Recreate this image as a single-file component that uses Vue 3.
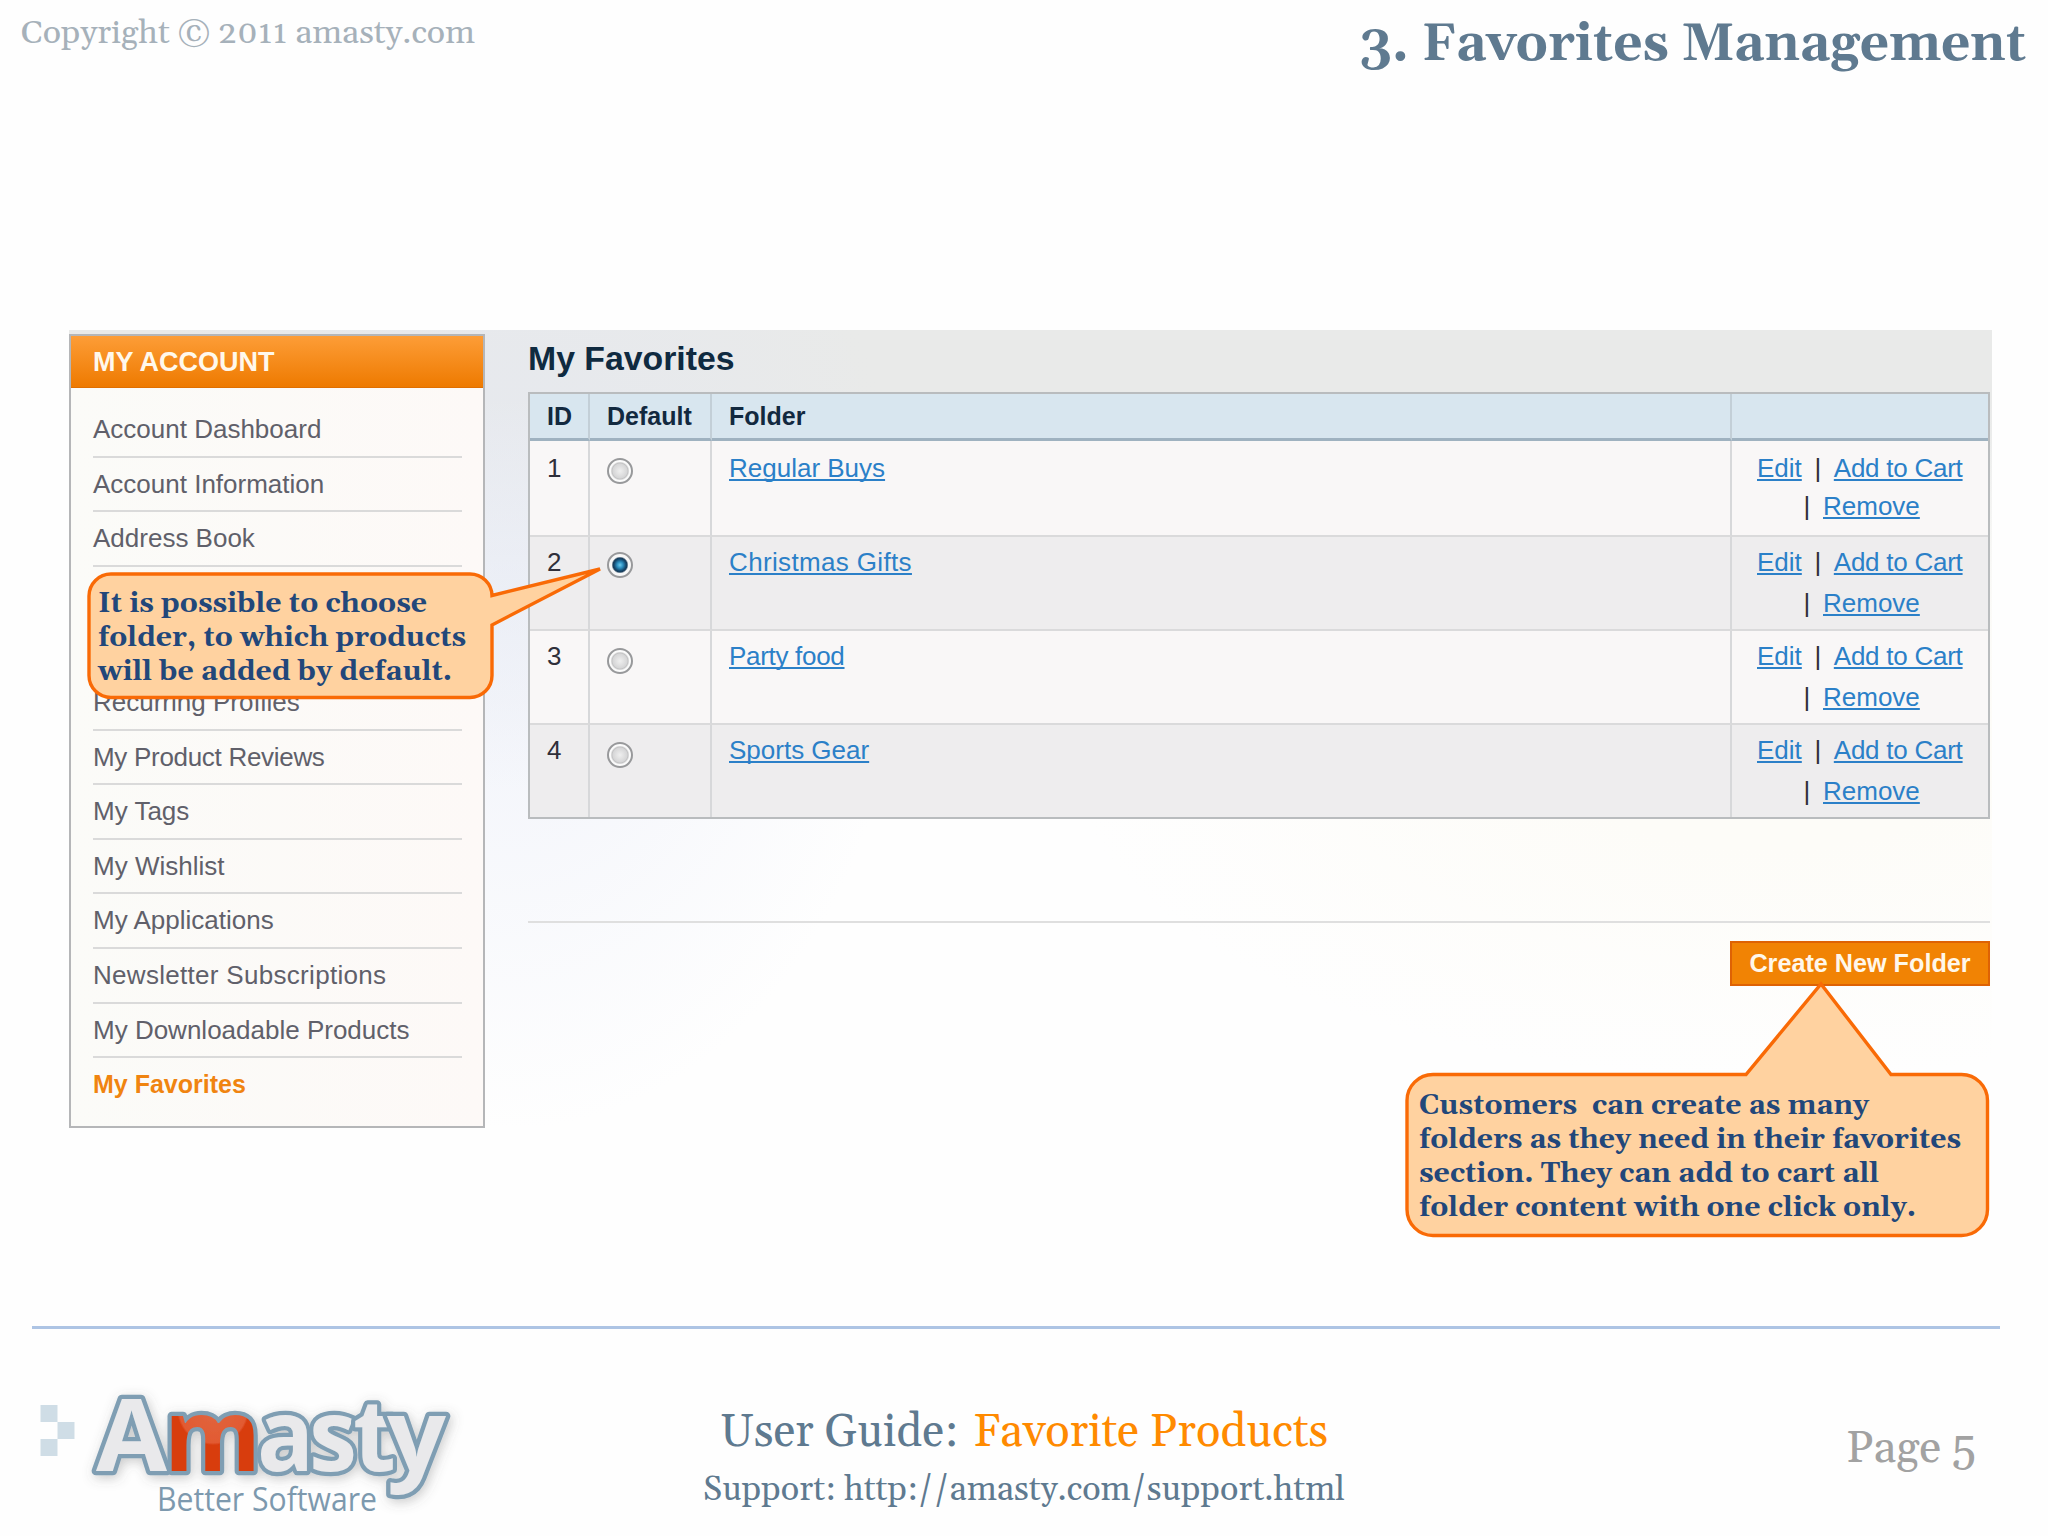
<template>
  <div class="slide">
    <header class="slide-header">
      <svg class="copyright" width="500" height="60">
        <text x="21" y="43" textLength="454" lengthAdjust="spacingAndGlyphs">Copyright © 2011 amasty.com</text>
      </svg>
      <svg class="title" width="708" height="90">
        <text x="20" y="60" textLength="666" lengthAdjust="spacingAndGlyphs">3. Favorites Management</text>
      </svg>
    </header>

    <main class="account">
      <aside class="sidebar">
        <h3>MY ACCOUNT</h3>
        <ul>
          <li v-for="(item, i) in menu" :key="i" :class="{ active: item === 'My Favorites' }">
            <span>{{ item }}</span>
          </li>
        </ul>
      </aside>

      <section class="favorites">
        <h2>My Favorites</h2>
        <table>
          <thead>
            <tr>
              <th class="col-id">ID</th>
              <th class="col-default">Default</th>
              <th class="col-folder">Folder</th>
              <th class="col-actions"></th>
            </tr>
          </thead>
          <tbody>
            <tr v-for="folder in folders" :key="folder.id">
              <td>{{ folder.id }}</td>
              <td class="radio-cell">
                <span class="radio" :class="{ checked: folder.id === defaultId }" @click="defaultId = folder.id"></span>
              </td>
              <td class="name"><a>{{ folder.name }}</a></td>
              <td class="actions">
                <div class="action-line"><a>Edit</a><i>|</i><a class="add">Add to Cart</a></div>
                <div class="action-line second"><i>|</i><a class="remove">Remove</a></div>
              </td>
            </tr>
          </tbody>
        </table>
        <div class="buttons">
          <button>Create New Folder</button>
        </div>
      </section>
    </main>

    <!-- callouts -->
    <svg class="callout callout-default" width="520" height="136" viewBox="85 566 520 136">
      <path d="M111 574H470a22 22 0 0 1 22 21.500L600 569L492 625V675.500a22 22 0 0 1-22 22H111a22 22 0 0 1-22-22V596a22 22 0 0 1 22-22Z" />
      <text x="98" y="612" textLength="329" lengthAdjust="spacingAndGlyphs">It is possible to choose</text>
      <text x="98" y="646" textLength="368" lengthAdjust="spacingAndGlyphs">folder, to which products</text>
      <text x="98" y="680" textLength="354" lengthAdjust="spacingAndGlyphs">will be added by default.</text>
    </svg>
    <svg class="callout callout-create" width="590" height="262" viewBox="1403 979 590 262">
      <path d="M1433 1074.500H1746L1821 984L1891 1074.500H1961.500a26 26 0 0 1 26 26V1209.500a26 26 0 0 1-26 26H1433a26 26 0 0 1-26-26V1100.500a26 26 0 0 1 26-26Z" />
      <text x="1419" y="1114" textLength="158" lengthAdjust="spacingAndGlyphs">Customers</text>
      <text x="1592" y="1114" textLength="277" lengthAdjust="spacingAndGlyphs">can create as many</text>
      <text x="1419" y="1148" textLength="542" lengthAdjust="spacingAndGlyphs">folders as they need in their favorites</text>
      <text x="1419" y="1182" textLength="460" lengthAdjust="spacingAndGlyphs">section. They can add to cart all</text>
      <text x="1419" y="1216" textLength="497" lengthAdjust="spacingAndGlyphs">folder content with one click only.</text>
    </svg>

    <footer class="slide-footer">
      <svg class="logo" width="460" height="200" viewBox="32 1336 460 200">
        <defs>
          <radialGradient id="shine" gradientUnits="userSpaceOnUse" cx="213" cy="1409" r="36">
            <stop offset="0" stop-color="#e0663f" />
            <stop offset="0.94" stop-color="#e25a32" />
            <stop offset="1" stop-color="#d83d0f" />
          </radialGradient>
          <filter id="glow" x="-10%" y="-20%" width="120%" height="140%">
            <feDropShadow dx="2" dy="3" stdDeviation="6" flood-color="#555" flood-opacity="0.3" />
          </filter>
        </defs>
        <g fill="#cfdde6">
          <rect x="40.500" y="1405" width="17" height="17" />
          <rect x="57.500" y="1422" width="17" height="17" />
          <rect x="40.500" y="1439" width="17" height="17" />
        </g>
        <g filter="url(#glow)">
          <text class="wordmark" y="1471"><tspan x="96" textLength="71" lengthAdjust="spacingAndGlyphs">A</tspan><tspan class="red" x="164" textLength="97" lengthAdjust="spacingAndGlyphs">m</tspan><tspan x="257" textLength="57" lengthAdjust="spacingAndGlyphs">a</tspan><tspan x="309" textLength="48" lengthAdjust="spacingAndGlyphs">s</tspan><tspan x="353" textLength="43" lengthAdjust="spacingAndGlyphs">t</tspan><tspan x="387" textLength="59" lengthAdjust="spacingAndGlyphs">y</tspan></text>
        </g>
        <text class="tagline" x="157" y="1511" textLength="220" lengthAdjust="spacingAndGlyphs">Better Software</text>
      </svg>
      <svg class="guide" width="680" height="160" viewBox="690 1376 680 160">
        <text class="guide-title" x="720" y="1446" textLength="238" lengthAdjust="spacingAndGlyphs">User Guide:</text>
        <text class="guide-title orange" x="973" y="1446" textLength="355" lengthAdjust="spacingAndGlyphs">Favorite Products</text>
        <text class="support" x="703" y="1500" textLength="642" lengthAdjust="spacingAndGlyphs">Support: http://amasty.com/support.html</text>
      </svg>
      <svg class="page" width="160" height="120" viewBox="1830 1400 160 120">
        <text x="1846" y="1462" textLength="130" lengthAdjust="spacingAndGlyphs">Page 5</text>
      </svg>
    </footer>
  </div>
</template>

<script setup>
import { ref } from 'vue'

const defaultId = ref(2)

// the two blank rows sit under the callout
const menu = [
  'Account Dashboard',
  'Account Information',
  'Address Book',
  '',
  '',
  'Recurring Profiles',
  'My Product Reviews',
  'My Tags',
  'My Wishlist',
  'My Applications',
  'Newsletter Subscriptions',
  'My Downloadable Products',
  'My Favorites'
]

const folders = [
  { id: 1, name: 'Regular Buys' },
  { id: 2, name: 'Christmas Gifts' },
  { id: 3, name: 'Party food' },
  { id: 4, name: 'Sports Gear' }
]
</script>

<style>
body {
  margin: 0;
  background: #fefefe;
}
</style>

<style scoped>
.slide {
  position: relative;
  display: flex;
  flex-direction: column;
  width: 2048px;
  height: 1536px;
  overflow: hidden;
  background: #fefefe;
  font-family: "Liberation Sans", Arial, sans-serif;
}
svg {
  display: block;
  overflow: visible;
}
svg text {
  font-family: Georgia, Gelasio, "Liberation Serif", serif;
}

.slide-header {
  display: flex;
  justify-content: space-between;
  height: 330px;
}
.copyright text {
  font-size: 33px;
  fill: #a6b1ba;
}
.title text {
  font-size: 53px;
  font-weight: bold;
  fill: #5f7a90;
}

.account {
  display: flex;
  gap: 43px;
  box-sizing: border-box;
  width: 1923px;
  height: 996px;
  margin-left: 69px;
  padding: 4px 2px 0 0;
  background:
    radial-gradient(ellipse 400px 540px at 440px 260px, rgba(226, 231, 246, 0.5), rgba(240, 242, 250, 0) 100%),
    radial-gradient(ellipse 700px 330px at 1700px 420px, #fdfcf8 30%, rgba(254, 254, 254, 0) 100%),
    linear-gradient(#e9eae9 0, #e9eae9 70px, #f5f6f6 260px, rgba(254, 254, 254, 0) 460px);
}

.sidebar {
  box-sizing: border-box;
  flex: none;
  width: 416px;
  height: 794px;
  border: 2px solid #b5b6b8;
  background: linear-gradient(90deg, #fbfbf8, #fdf9f7);
}
.sidebar h3 {
  box-sizing: border-box;
  height: 52px;
  margin: 0;
  padding: 1px 0 0 22px;
  line-height: 51px;
  font-size: 27px;
  color: #fff8ec;
  background: linear-gradient(#fd9d37, #ee7a00);
  border-bottom: 1px solid #e06f00;
}
.sidebar ul {
  margin: 0;
  padding: 15px 21px 0 22px;
  list-style: none;
}
.sidebar li {
  box-sizing: border-box;
  height: 54.6px;
  line-height: 53px;
  font-size: 26px;
  white-space: nowrap;
  color: #60606a;
  border-bottom: 2px solid #dadada;
}
.sidebar li:nth-child(7) {
  letter-spacing: -0.3px;
}
.sidebar li:nth-child(11) {
  letter-spacing: 0.3px;
}
.sidebar li.active {
  border: 0;
  font-weight: bold;
  font-size: 25px;
  color: #f08410;
}

.favorites {
  width: 1462px;
}
.favorites h2 {
  height: 58px;
  margin: 0;
  padding-top: 4px;
  box-sizing: border-box;
  line-height: 40px;
  font-size: 33.8px;
  color: #0f2a40;
}
table {
  table-layout: fixed;
  width: 1462px;
  border: 2px solid #b9bcbe;
  border-collapse: separate;
  border-spacing: 0;
  font-size: 26px;
  color: #2f2f3a;
}
.col-id { width: 60px; }
.col-default { width: 122px; }
.col-folder { width: 1020px; }
th {
  box-sizing: border-box;
  height: 47px;
  padding: 0 0 1px 17px;
  text-align: left;
  font-size: 25px;
  line-height: 40px;
  color: #12293f;
  background: #d8e6ef;
  border-right: 2px solid #c3cfd7;
  border-bottom: 3px solid #9fb2c0;
}
td {
  box-sizing: border-box;
  height: 94px;
  padding: 6px 0 0 17px;
  vertical-align: top;
  line-height: 38px;
  background: #f9f7f7;
  border-right: 2px solid #d7d8da;
  border-bottom: 2px solid #dadadb;
}
th:last-child,
td:last-child {
  border-right: 0;
}
tr:nth-child(even) td {
  background: #eeedee;
}
tbody tr:first-child td {
  height: 96px;
  padding-top: 8px;
}
tbody tr:last-child td {
  height: 92px;
  border-bottom: 0;
}
td a {
  color: #2b80c8;
  text-decoration: underline;
  text-decoration-thickness: 2px;
  text-underline-offset: 2px;
  text-decoration-skip-ink: none;
}
tr:nth-child(2) .name {
  letter-spacing: 0.35px;
}
tr:nth-child(3) .name {
  letter-spacing: -0.3px;
}
tbody tr td.radio-cell {
  padding-top: 17px;
}
tbody tr:nth-child(2) td.radio-cell {
  padding-top: 15px;
}
.radio {
  display: block;
  box-sizing: border-box;
  width: 26px;
  height: 26px;
  border: 2px solid #98999b;
  border-radius: 50%;
  background: radial-gradient(circle at 50% 50%, #efefef 0, #d6d6d7 7px, #c3c3c4 8px, #fbfbfb 9.500px);
}
.radio.checked {
  background: radial-gradient(circle at 50% 50%, #6fcbec 0, #2d8fc0 3px, #14466b 6px, #1a3d5a 7px, #f7f7f7 8.500px);
}
td.actions {
  padding-left: 25px;
}
.action-line {
  display: flex;
  height: 38px;
}
.action-line i {
  width: 32px;
  font-style: normal;
  text-align: center;
}
.action-line .add {
  letter-spacing: -0.25px;
}
.action-line.second {
  margin-top: 3px;
  padding-left: 34px;
}
tbody tr:first-child .second {
  margin-top: 0;
}

.buttons {
  display: flex;
  justify-content: flex-end;
  margin-top: 102px;
  padding-top: 18px;
  border-top: 2px solid #dfdfdf;
}
.buttons button {
  box-sizing: border-box;
  width: 260px;
  height: 45px;
  padding: 0;
  border: 2px solid #de6204;
  background: #f18304;
  font: bold 25.2px "Liberation Sans", Arial, sans-serif;
  color: #fff7ea;
}

.callout {
  position: absolute;
}
.callout-default {
  left: 85px;
  top: 566px;
}
.callout-create {
  left: 1403px;
  top: 979px;
}
.callout path {
  fill: #ffd2a0;
  stroke: #f96a06;
  stroke-width: 3.4;
}
.callout text {
  font-size: 29px;
  font-weight: bold;
  fill: #22477a;
}

.slide-footer {
  display: flex;
  align-items: flex-end;
  box-sizing: border-box;
  height: 210px;
  margin: 0 48px 0 32px;
  border-top: 3px solid #adc4e4;
}
.wordmark {
  font-family: "Open Sans", sans-serif;
  font-weight: bold;
  font-size: 100px;
  fill: #e9e9eb;
  stroke: #7f9eb3;
  stroke-width: 8.500px;
  stroke-linejoin: round;
  paint-order: stroke;
}
.wordmark .red {
  fill: url(#shine);
}
.logo .tagline {
  font-family: "Open Sans", sans-serif;
  font-size: 32px;
  fill: #7d99ae;
}
.guide {
  margin-left: 198px;
}
.guide-title {
  font-size: 46px;
  fill: #5f7a90;
}
.guide .orange {
  fill: #ff8a00;
}
.support {
  font-size: 35px;
  fill: #5f7a90;
}
.page {
  margin: 0 10px 16px auto;
}
.page text {
  font-size: 45px;
  fill: #a2a2a2;
}
</style>
